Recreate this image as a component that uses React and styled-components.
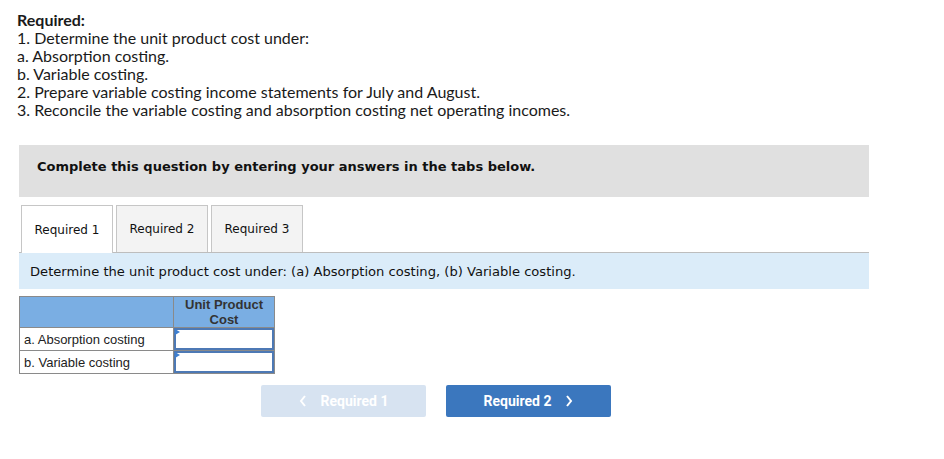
import React from "react";
import styled, { createGlobalStyle } from "styled-components";

const Global = createGlobalStyle`
  body {
    margin: 0;
    background: #ffffff;
    font-family: "Lato", "Liberation Sans", sans-serif;
    color: #1a1a1a;
  }
`;

const Page = styled.div`
  width: 944px;
  height: 459px;
  padding: 11px 0 0 17px;
  box-sizing: border-box;
`;

const Intro = styled.div`
  font-size: 16px;
  line-height: 18px;
`;

const Title = styled.div`
  font-weight: bold;
`;

const Panel = styled.div`
  width: 850px;
  margin-left: 2px;
`;

const Banner = styled.div`
  margin-top: 26px;
  height: 52px;
  box-sizing: border-box;
  background: #e0e0e0;
  display: flex;
  align-items: center;
  padding: 0 0 9px 18px;
  font-family: "DejaVu Sans", Verdana, sans-serif;
  font-weight: bold;
  font-size: 13px;
  color: #111;
`;

const Tabs = styled.div`
  margin-top: 8px;
  display: flex;
  gap: 3px;
  padding-left: 2px;
  border-bottom: 1px solid #bdbdbd;
`;

const Tab = styled.div`
  width: 92px;
  box-sizing: border-box;
  border: 1px solid #c6c6c6;
  border-bottom: none;
  background: ${(p) => (p.$active ? "#ffffff" : "#f3f3f3")};
  display: flex;
  align-items: center;
  justify-content: center;
  font-family: "DejaVu Sans", Verdana, sans-serif;
  font-size: 12px;
  color: #111;
  margin-bottom: ${(p) => (p.$active ? "-1px" : "0")};
  height: ${(p) => (p.$active ? "48px" : "47px")};
`;

const Prompt = styled.div`
  height: 36px;
  background: #dbecf9;
  display: flex;
  align-items: center;
  padding-left: 11px;
  font-family: "DejaVu Sans", Verdana, sans-serif;
  font-size: 13.1px;
  color: #111;
`;

const Table = styled.table`
  margin-top: 7px;
  border-collapse: collapse;
  font-family: "Liberation Sans", Arial, sans-serif;
  font-size: 13px;
  color: #222;
`;

const HeadCell = styled.th`
  background: #7aaee3;
  border: 1px solid #8a8a8a;
  width: ${(p) => p.$w}px;
  height: 30px;
  padding: 0;
  font-weight: bold;
  font-size: 13px;
  line-height: 15px;
  color: #333;
  vertical-align: middle;
`;

const LabelCell = styled.td`
  border: 1px solid #8a8a8a;
  height: 21px;
  padding: 0 0 0 4px;
  text-align: left;
`;

const InputCell = styled.td`
  border: 1px solid #8a8a8a;
  padding: 0;
  position: relative;
`;

const Field = styled.div`
  border: 2px solid #4d79b5;
  background: #fff;
  box-sizing: border-box;
  height: 22px;
`;

const Flag = styled.span`
  position: absolute;
  left: 1px;
  top: 1px;
  width: 0;
  height: 0;
  border-top: 3px solid transparent;
  border-bottom: 3px solid transparent;
  border-left: 5px solid #3d7fd0;
`;

const Nav = styled.div`
  margin-top: 11px;
  margin-left: 242px;
  display: flex;
  gap: 20px;
`;

const NavButton = styled.div`
  width: 165px;
  height: 32px;
  border-radius: 2px;
  background: ${(p) => (p.$disabled ? "#d7e3f1" : "#3b77be")};
  color: #ffffff;
  display: flex;
  align-items: center;
  justify-content: center;
  gap: 14px;
  font-family: "Roboto", "Liberation Sans", sans-serif;
  font-weight: bold;
  font-size: 14px;
`;

const Chevron = ({ left }) => (
  <svg width="8" height="12" viewBox="0 0 8 12">
    <path
      d={left ? "M6 1 L2 6 L6 11" : "M2 1 L6 6 L2 11"}
      fill="none"
      stroke="#fff"
      strokeWidth="2"
    />
  </svg>
);

export default function App() {
  return (
    <>
      <Global />
      <Page>
        <Intro>
          <Title>Required:</Title>
          <div>1. Determine the unit product cost under:</div>
          <div>a. Absorption costing.</div>
          <div>b. Variable costing.</div>
          <div>2. Prepare variable costing income statements for July and August.</div>
          <div>3. Reconcile the variable costing and absorption costing net operating incomes.</div>
        </Intro>
        <Panel>
          <Banner>Complete this question by entering your answers in the tabs below.</Banner>
          <Tabs>
            <Tab $active>Required 1</Tab>
            <Tab>Required 2</Tab>
            <Tab>Required 3</Tab>
          </Tabs>
          <Prompt>
            Determine the unit product cost under: (a) Absorption costing, (b) Variable costing.
          </Prompt>
          <Table>
            <thead>
              <tr>
                <HeadCell $w={153}></HeadCell>
                <HeadCell $w={100}>
                  Unit Product
                  <br />
                  Cost
                </HeadCell>
              </tr>
            </thead>
            <tbody>
              <tr>
                <LabelCell>a. Absorption costing</LabelCell>
                <InputCell>
                  <Field />
                  <Flag />
                </InputCell>
              </tr>
              <tr>
                <LabelCell>b. Variable costing</LabelCell>
                <InputCell>
                  <Field />
                  <Flag />
                </InputCell>
              </tr>
            </tbody>
          </Table>
          <Nav>
            <NavButton $disabled>
              <Chevron left />
              Required 1
            </NavButton>
            <NavButton>
              Required 2
              <Chevron />
            </NavButton>
          </Nav>
        </Panel>
      </Page>
    </>
  );
}
